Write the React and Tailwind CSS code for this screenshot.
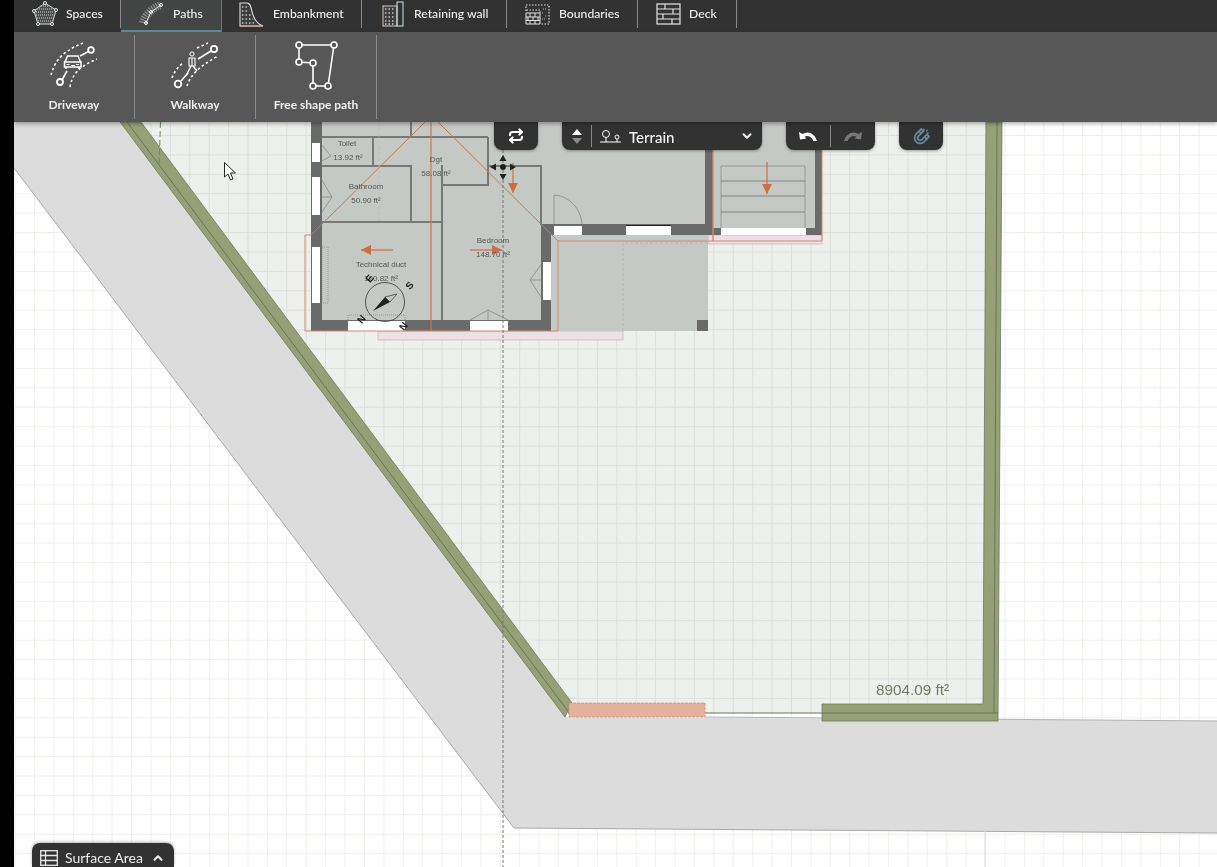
import { ChevronDown, ChevronUp, Repeat } from "lucide-react";

const tabs = [
  { label: "Spaces", w: "w-[107px]", pl: "pl-[18px]", gap: "gap-[8px]", icon: <SpacesIcon /> },
  { label: "Paths", w: "w-[101px]", pl: "pl-[18px]", gap: "gap-[8px]", icon: <PathsIcon />, active: true },
  { label: "Embankment", w: "w-[140px]", pl: "pl-[17px]", gap: "gap-[9px]", icon: <EmbankmentIcon /> },
  { label: "Retaining wall", w: "w-[145px]", pl: "pl-[20px]", gap: "gap-[10px]", icon: <RetainingIcon /> },
  { label: "Boundaries", w: "w-[131px]", pl: "pl-[18px]", gap: "gap-[9px]", icon: <BoundariesIcon /> },
  { label: "Deck", w: "w-[99px]", pl: "pl-[18px]", gap: "gap-[8px]", icon: <DeckIcon /> },
];

function SpacesIcon() {
  return (
    <svg width="26" height="26" viewBox="0 0 26 26" fill="none">
      <path d="M13 2 L24 9 L20 23 L6 23 L2 10 Z" fill="#4a4a4a" stroke="#cfe3e6" strokeWidth="1" />
      <path d="M5 8h16M4 11h18M4 14h18M5 17h16M6 20h14M9 5h8" stroke="#a8a8a8" strokeWidth="1.4" strokeDasharray="1 1" />
      {[[13, 2], [24, 9], [20, 23], [6, 23], [2, 10]].map(([x, y]) => (
        <circle key={x} cx={x} cy={y} r="1.5" fill="#323232" stroke="#fff" strokeWidth="0.9" />
      ))}
    </svg>
  );
}

function PathsIcon() {
  return (
    <svg width="26" height="26" viewBox="0 0 26 26" fill="none">
      <path d="M4 22 C6 14 13 7 22 4" stroke="#8f8f8f" strokeWidth="8" strokeDasharray="1.2 1.2" />
      <path d="M7 22 L12 11 L22 4" stroke="#d8e8ea" strokeWidth="1" />
      <circle cx="7" cy="22" r="1.5" stroke="#fff" />
      <circle cx="12" cy="11" r="1.5" stroke="#fff" />
      <circle cx="22" cy="4" r="1.5" stroke="#fff" />
    </svg>
  );
}

function EmbankmentIcon() {
  return (
    <svg width="25" height="26" viewBox="0 0 25 26" fill="none">
      <path d="M1 2 H8 C12 2 12 8 14 14 C16 20 19 23 24 25 H1 Z" fill="#3c3c3c" stroke="#ddd" strokeWidth="1.1" />
      <path d="M3 6h6M3 10h7M3 14h9M3 18h11M3 22h14" stroke="#c5c5c5" strokeWidth="1.5" strokeDasharray="1.5 2" />
      <path d="M1 25 H24" stroke="#e0a58a" strokeWidth="1" />
    </svg>
  );
}

function RetainingIcon() {
  return (
    <svg width="22" height="26" viewBox="0 0 22 26" fill="none">
      <rect x="1" y="5" width="14" height="20" fill="#3c3c3c" stroke="#d8c8be" strokeWidth="1" />
      <path d="M3 8h10M3 12h10M3 16h10M3 20h10M3 23h10" stroke="#c5c5c5" strokeWidth="1.5" strokeDasharray="1.5 2" />
      <rect x="15" y="1" width="6" height="24" stroke="#cfe3e6" strokeWidth="1" />
    </svg>
  );
}

function BoundariesIcon() {
  return (
    <svg width="25" height="22" viewBox="0 0 25 22" fill="none">
      <path d="M1 10h14v11H1z M1 14h14 M1 17.5h14 M5 10v4 M10 10v4 M3 14v3.5 M8 14v3.5 M13 14v3.5 M5 17.5v3.5 M10 17.5v3.5" stroke="#e2e2e2" strokeWidth="1" />
      <path d="M1 8 V2 H24 V21 H15 M15 10 V7 H1" stroke="#ddd" strokeWidth="1.2" strokeDasharray="1.5 1.5" />
      <path d="M18 6h3M17 10h2M20 13h2M17 16h3" stroke="#bbb" strokeWidth="1" strokeDasharray="1 1" />
    </svg>
  );
}

function DeckIcon() {
  return (
    <svg width="25" height="22" viewBox="0 0 25 22" fill="none">
      <rect x="1" y="1" width="23" height="20" stroke="#e4e4e4" strokeWidth="1.2" />
      <path d="M1 6h23M1 11h23M1 16h23M9 1v5M17 6v5M7 11v5M16 16v5" stroke="#e4e4e4" strokeWidth="1.2" />
    </svg>
  );
}

function DrivewayIcon() {
  return (
    <svg width="48" height="48" viewBox="0 0 48 48" fill="none">
      <path d="M1 34 C4 24 8 12 33 2" stroke="#fff" strokeWidth="1.6" strokeDasharray="2.5 2.5" />
      <path d="M20 46 C22 34 28 26 47 18" stroke="#fff" strokeWidth="1.6" strokeDasharray="2.5 2.5" />
      <circle cx="10" cy="41" r="3" stroke="#fff" strokeWidth="1.8" />
      <path d="M12 39 L17 30" stroke="#fff" strokeWidth="1.6" />
      <circle cx="41" cy="9" r="2.8" stroke="#fff" strokeWidth="1.8" />
      <path d="M38.5 10.5 L30 15" stroke="#fff" strokeWidth="1.6" />
      <path d="M15 21 L17.5 15 H28 L30.5 21 M14.5 21 H31 V26 H14.5 Z M16 26 v2 M29 26 v2" stroke="#fff" strokeWidth="1.5" />
      <path d="M16.5 23.5h3M26 23.5h3M21 24.5h4" stroke="#fff" strokeWidth="1.2" />
    </svg>
  );
}

function WalkwayIcon() {
  return (
    <svg width="50" height="48" viewBox="0 0 50 48" fill="none">
      <path d="M2 37 C4 31 8 26 13 22" stroke="#fff" strokeWidth="1.6" strokeDasharray="2.5 2.5" />
      <path d="M27 7 L38 2" stroke="#fff" strokeWidth="1.6" strokeDasharray="2.5 2.5" />
      <path d="M17 45 C20 35 28 26 48 15" stroke="#fff" strokeWidth="1.6" strokeDasharray="2.5 2.5" />
      <circle cx="8" cy="43" r="3.3" stroke="#fff" strokeWidth="1.8" />
      <path d="M11 40 L18 32" stroke="#fff" strokeWidth="1.6" />
      <circle cx="44" cy="8" r="3.1" stroke="#fff" strokeWidth="1.8" />
      <path d="M41 10 L28 18" stroke="#fff" strokeWidth="1.6" />
      <circle cx="22" cy="13" r="2.1" stroke="#fff" strokeWidth="1" />
      <path d="M19 17 H25 V25 H19 Z M22 17 V25" stroke="#fff" strokeWidth="1.1" />
      <path d="M23 25 L27 30 M21 25 L17 33" stroke="#fff" strokeWidth="1.5" />
    </svg>
  );
}

function FreeShapeIcon() {
  const pts = [[6, 5], [41, 5], [35, 46], [20, 46], [20, 23], [6, 22]];
  return (
    <svg width="46" height="52" viewBox="0 0 46 52" fill="none">
      <path d="M6 5 L41 5 L35 46 L20 46 L20 23 L6 22 Z" stroke="#fff" strokeWidth="1.6" />
      {pts.map(([x, y]) => (
        <circle key={x + "-" + y} cx={x} cy={y} r="3" fill="#575757" stroke="#fff" strokeWidth="1.6" />
      ))}
    </svg>
  );
}

function TerrainIcon() {
  return (
    <svg width="22" height="14" viewBox="0 0 22 14" fill="none" stroke="#fff" strokeWidth="1">
      <circle cx="6" cy="5" r="3.5" />
      <path d="M6 8.5 V13 M0 13 H21" />
      <circle cx="17" cy="8" r="2" />
      <path d="M17 10 V13" />
    </svg>
  );
}

function TableIcon() {
  return (
    <svg width="18" height="16" viewBox="0 0 18 16" fill="none" stroke="#e8e8e8" strokeWidth="1.3">
      <rect x="0.7" y="0.7" width="16.6" height="14.6" />
      <path d="M1 5.5h16M1 10.5h16M5.5 1v14" />
    </svg>
  );
}

// same curved arrow for undo and redo, redo is just flipped
function CurvedArrow({ color, flip }) {
  return (
    <svg width="18" height="10" viewBox="0 0 18 10" className={flip ? "-scale-x-100" : ""}>
      <path d="M0 1 L1 8.5 L7.5 7.5 L5.5 5.8 C8.5 4.2 12 5 14.5 10 H18 C15.5 2 9 -0.5 3.5 3 Z" fill={color} />
    </svg>
  );
}

function MagnetIcon() {
  return (
    <svg width="19" height="19" viewBox="0 0 24 24" fill="none" stroke="#64899a" strokeWidth="2.2" strokeLinejoin="round">
      <g transform="rotate(45 11 13)">
        <path d="M4 5 H8 V14 a3 3 0 0 0 6 0 V5 H18 V14 a7 7 0 0 1 -14 0 Z M4 9 H8 M14 9 H18" />
      </g>
      <path d="M15 2 V4.5 M21 8 H18.5 M19.5 3.5 L18 5.5" strokeWidth="1.8" />
    </svg>
  );
}

function Wall({ x, y, w, h, color = "#6a6a6a" }) {
  return <rect x={x} y={y} width={w} height={h} fill={color} />;
}

function Arrow({ x1, y1, x2, y2 }) {
  const dx = Math.sign(x2 - x1);
  const dy = Math.sign(y2 - y1);
  const head = dy === 0
    ? `${x2},${y2} ${x2 - dx * 10},${y2 - 5} ${x2 - dx * 10},${y2 + 5}`
    : `${x2},${y2} ${x2 - 5},${y2 - dy * 10} ${x2 + 5},${y2 - dy * 10}`;
  return (
    <g>
      <line x1={x1} y1={y1} x2={x2} y2={y2} stroke="#c96f42" strokeWidth="1.2" />
      <polygon points={head} fill="#c96f42" />
    </g>
  );
}

function RoomLabel({ x, y, children }) {
  return (
    <text x={x} y={y} textAnchor="middle" fontSize="8" fill="#555" fontFamily="Liberation Sans, sans-serif">
      {children}
    </text>
  );
}

function Plan() {
  const letter = { fontSize: 10, fill: "#222", fontFamily: "Liberation Sans, sans-serif", fontWeight: 700, textAnchor: "middle" };
  const thin = "#787878";
  return (
    <svg className="absolute inset-0 h-full w-full" viewBox="14 122 1203 745" preserveAspectRatio="none">
      <defs>
        <pattern id="grid" x="34" y="135" width="19.41" height="19.41" patternUnits="userSpaceOnUse">
          <path d="M0 0H19.41M0 0V19.41" stroke="#efefeb" strokeWidth="2" fill="none" />
        </pattern>
        <clipPath id="noRoad">
          <path clipRule="evenodd" d="M14 122H1217V867H14Z M14 122 L120 122 L566 717 L1217 721 L1217 833 L514 828 L14 168Z" />
        </clipPath>
      </defs>
      <rect x="14" y="122" width="1203" height="745" fill="#fff" />

      {/* terrain */}
      <polygon points="141,122 572,703 568,713 983,713 1002,122" fill="#edf0ec" />
      {/* road */}
      <polygon points="14,122 120,122 566,717 1217,721 1217,833 514,828 14,168" fill="#dcdcdc" />
      <rect x="14" y="122" width="1203" height="745" fill="url(#grid)" style={{ mixBlendMode: "multiply" }} clipPath="url(#noRoad)" />
      <path d="M14 168 L514 828 L1217 833" stroke="#a9a9a9" strokeWidth="1" fill="none" />
      <path d="M705 717 L1217 721" stroke="#b0b0b0" strokeWidth="1" fill="none" />
      <path d="M985 830 V867" stroke="#d8d8d8" strokeWidth="1" />

      {/* walls of the plot */}
      <polygon points="120,122 141,122 572,703 565,717" fill="#979f77" stroke="#6b7a5c" strokeWidth="0.8" />
      <line x1="127" y1="122" x2="570" y2="714" stroke="#66775a" strokeWidth="1" />
      <polygon points="986,122 1002,122 998,721 822,721 822,704 983,704" fill="#979f77" stroke="#6b7a5c" strokeWidth="0.8" />
      <line x1="997" y1="122" x2="994" y2="713" stroke="#66775a" strokeWidth="1" />
      <line x1="568" y1="713" x2="998" y2="713" stroke="#66775a" strokeWidth="1" />
      <rect x="569" y="703" width="136" height="14" fill="#e2b29c" stroke="#d9886a" strokeWidth="0.7" strokeDasharray="3 1" />
      <line x1="160.5" y1="122" x2="159" y2="166" stroke="#6b8a5c" strokeWidth="1" strokeDasharray="6 3" />
      <text x="876" y="695" fontSize="15.3" fill="#6f7d60" fontFamily="Liberation Sans, sans-serif">8904.09 ft²</text>

      {/* pink strips and floors */}
      <rect x="378" y="331" width="245" height="9" fill="#ecdfe6" stroke="#b9adb3" strokeWidth="0.6" />
      <rect x="708" y="235" width="114" height="9" fill="#ecdfe6" stroke="#b9adb3" strokeWidth="0.6" />
      <rect x="311" y="122" width="511" height="113" fill="#c5c9c5" />
      <rect x="311" y="235" width="397" height="96" fill="#c5c9c5" />

      {/* thick walls */}
      <Wall x={311} y={122} w={11} h={209} />
      <Wall x={311} y={320} w={240} h={11} />
      <Wall x={541} y={224} w={10} h={107} />
      <Wall x={541} y={224} w={172} h={11} />
      <Wall x={705} y={122} w={8} h={113} />
      <Wall x={815} y={122} w={7} h={113} />
      <Wall x={713} y={228} w={109} h={7} />
      <rect x="697" y="320" width="11" height="11" fill="#6a6a6a" />

      {/* thin walls */}
      <Wall color={thin} x={322} y={136} w={166} h={2} />
      <Wall color={thin} x={372} y={137} w={2} h={29} />
      <Wall color={thin} x={322} y={165} w={90} h={2} />
      <Wall color={thin} x={410} y={122} w={2} h={15} />
      <Wall color={thin} x={410} y={165} w={2} h={57} />
      <Wall color={thin} x={322} y={221} w={120} h={2} />
      <Wall color={thin} x={441} y={165} w={2} h={155} />
      <Wall color={thin} x={441} y={184} w={48} h={2} />
      <Wall color={thin} x={487} y={137} w={2} h={49} />
      <Wall color={thin} x={488} y={165} w={54} h={2} />
      <Wall color={thin} x={540} y={165} w={2} h={60} />

      {/* windows */}
      <rect x="312" y="143" width="8" height="19" fill="#fff" />
      <rect x="312" y="177" width="8" height="38" fill="#fff" />
      <rect x="312" y="247" width="8" height="56" fill="#fff" />
      <rect x="348" y="321" width="57" height="10" fill="#fff" />
      <rect x="470" y="321" width="38" height="10" fill="#fff" />
      <rect x="543" y="262" width="8" height="38" fill="#fff" />
      <rect x="554" y="226" width="28" height="9" fill="#fff" />
      <rect x="626" y="226" width="45" height="9" fill="#fff" />
      <line x1="626" y1="225.5" x2="671" y2="225.5" stroke="#222" strokeWidth="1" />
      <rect x="721" y="228" width="85" height="7" fill="#fff" />

      {/* doors and window swings */}
      <g stroke="#777" strokeWidth="0.6" fill="none">
        <path d="M554 226 V195 C570 196 582 210 582 226" />
        <path d="M320 143 L331 156 L320 162 M320 177 L332 197 L320 215 M320 197 H332" />
        <rect x="322" y="247" width="6" height="56" strokeDasharray="1 1" />
        <path d="M543 262 L530 280 L543 300 M530 280 H543" />
        <path d="M470 320 L488 310 L508 320 M488 310 V320" />
        <path d="M348 320 V315 H405 V320" strokeDasharray="1 1" />
        <path d="M721 166 H805 V228 M721 166 V228" />
        <path d="M721 181 H805 M721 196 H805 M721 212 H805" stroke="#555" />
      </g>

      {/* orange outlines */}
      <g stroke="#d08a68" strokeWidth="1" fill="none">
        <path d="M311 235 H305 V331 H558 V241 H822 V122" />
        <path d="M713 122 V241" strokeWidth="1.4" />
      </g>
      <g stroke="#c9784f" strokeWidth="1" fill="none">
        <path d="M311 235 L425 122 M438 122 L558 241" />
        <path d="M431 122 V331" strokeWidth="1.2" />
      </g>

      {/* dashed guides */}
      <path d="M503 150 V867" stroke="#777" strokeWidth="1" strokeDasharray="3 2" fill="none" />
      <path d="M379 122 V222" stroke="#bbb" strokeWidth="0.8" strokeDasharray="3 3" fill="none" />
      <path d="M623 331 V243 H708" stroke="#aeb2ae" strokeWidth="0.8" strokeDasharray="3 2" fill="none" />

      <Arrow x1={393} y1={250} x2={361} y2={250} />
      <Arrow x1={470} y1={250} x2={502} y2={250} />
      <Arrow x1={513} y1={163} x2={513} y2={193} />
      <Arrow x1={767} y1={162} x2={767} y2={194} />

      <RoomLabel x={347} y={146}>Toilet</RoomLabel>
      <RoomLabel x={348} y={160}>13.92 ft²</RoomLabel>
      <RoomLabel x={436} y={162}>Dgt</RoomLabel>
      <RoomLabel x={436} y={176}>58.08 ft²</RoomLabel>
      <RoomLabel x={366} y={189}>Bathroom</RoomLabel>
      <RoomLabel x={366} y={203}>50.90 ft²</RoomLabel>
      <RoomLabel x={381} y={267}>Technical duct</RoomLabel>
      <RoomLabel x={381} y={281}>120.82 ft²</RoomLabel>
      <RoomLabel x={493} y={243}>Bedroom</RoomLabel>
      <RoomLabel x={493} y={257}>148.70 ft²</RoomLabel>

      {/* move handle */}
      <g fill="#222">
        <circle cx="503" cy="167" r="3" />
        <polygon points="503,155 499.5,161 506.5,161" />
        <polygon points="503,180 499.5,174 506.5,174" />
        <polygon points="490,167 496,163.5 496,170.5" />
        <polygon points="516,167 510,163.5 510,170.5" />
      </g>

      {/* compass */}
      <circle cx="385" cy="302" r="19.5" fill="none" stroke="#333" strokeWidth="0.8" />
      <polygon points="373,311 385,297 390,302" fill="#222" />
      <polygon points="397,294 385,297 390,302" fill="#c5c9c5" stroke="#333" strokeWidth="0.7" />
      <text x={369} y={282} transform="rotate(-50 369 278)" {...letter}>E</text>
      <text x={409} y={289} transform="rotate(-50 409 285)" {...letter}>S</text>
      <text x={361} y={323} transform="rotate(-50 361 319)" {...letter}>N</text>
      <text x={403} y={330} transform="rotate(-50 403 326)" {...letter}>N</text>

      {/* mouse pointer */}
      <path d="M224.5 162.5 V177 L228 174 L230.5 180 L233 179 L230.5 173 L235.5 173 Z" fill="#fff" stroke="#111" strokeWidth="0.9" />
    </svg>
  );
}

export default function App() {
  return (
    <div className="flex h-screen w-full overflow-hidden bg-black font-['Lato',sans-serif]">
      <div className="w-[14px] shrink-0 bg-black" />
      <div className="flex min-w-0 flex-1 flex-col">
        {/* tabs */}
        <div className="relative z-10 flex h-8 shrink-0 bg-[#323232]">
          {tabs.map((t) => (
            <div
              key={t.label}
              className={
                t.active
                  ? `flex h-8 items-center border-b-[2.5px] border-r border-b-[#5f8c9a] border-r-[#777] bg-[#434545] pb-[2px] ${t.w} ${t.pl} ${t.gap}`
                  : `flex h-7 items-center border-r border-[#8a8a8a] ${t.w} ${t.pl} ${t.gap}`
              }
            >
              {t.icon}
              <span className="text-[12.2px] font-medium text-[#f2f2f2]">{t.label}</span>
            </div>
          ))}
        </div>

        {/* tool row */}
        <div className="relative z-10 flex h-[90px] shrink-0 items-stretch bg-[#575757] py-[3px] shadow-[0_2px_4px_rgba(0,0,0,0.3)]">
          <div className="flex w-[121px] flex-col items-center border-r border-[#8a8a8a] pt-[6px]">
            <DrivewayIcon />
            <span className="mt-[7px] text-[12px] font-bold text-[#eeeeee]">Driveway</span>
          </div>
          <div className="flex w-[121px] flex-col items-center border-r border-[#8a8a8a] pt-[6px]">
            <WalkwayIcon />
            <span className="mt-[7px] text-[12px] font-bold text-[#eeeeee]">Walkway</span>
          </div>
          <div className="flex w-[121px] flex-col items-center border-r border-[#8a8a8a] pt-[5px]">
            <FreeShapeIcon />
            <span className="mt-[4px] text-[12px] font-bold text-[#eeeeee]">Free shape path</span>
          </div>
        </div>

        {/* canvas */}
        <div className="relative min-h-0 flex-1">
          <Plan />

          <div className="absolute left-[480px] top-0 flex h-7 w-11 items-center justify-center rounded-b-lg bg-[#323232] shadow-[0_1px_3px_rgba(0,0,0,0.35)]">
            <Repeat size={16} strokeWidth={3} color="#fff" />
          </div>

          <div className="absolute left-[548px] top-0 flex h-7 w-[200px] items-center rounded-b-lg bg-[#323232] shadow-[0_1px_3px_rgba(0,0,0,0.35)]">
            <div className="ml-[10px] flex flex-col gap-[3px]">
              <div className="h-0 w-0 border-x-[5px] border-b-[6px] border-x-transparent border-b-white" />
              <div className="h-0 w-0 border-x-[5px] border-t-[6px] border-x-transparent border-t-[#8a8a8a]" />
            </div>
            <div className="ml-[9px] h-[22px] w-px bg-[#888]" />
            <div className="ml-[8px]"><TerrainIcon /></div>
            <span className="ml-[7px] pt-[2px] text-[15px] font-medium text-[#f4f4f4]">Terrain</span>
            <ChevronDown size={14} strokeWidth={3.5} color="#eee" className="ml-auto mr-[8px]" />
          </div>

          <div className="absolute left-[772px] top-0 flex h-7 w-[89px] items-center rounded-b-lg bg-[#323232] shadow-[0_1px_3px_rgba(0,0,0,0.35)]">
            <div className="ml-[13px]"><CurvedArrow color="#fff" /></div>
            <div className="ml-[13px] h-[22px] w-px bg-[#888]" />
            <div className="ml-[13px]"><CurvedArrow color="#777" flip /></div>
          </div>

          <div className="absolute left-[885px] top-0 flex h-7 w-11 items-center justify-center rounded-b-lg bg-[#323232] shadow-[0_1px_3px_rgba(0,0,0,0.35)]">
            <MagnetIcon />
          </div>

          <div className="absolute bottom-0 left-[18px] flex h-6 w-[142px] items-center rounded-t-lg bg-[#323232] pl-2 pt-[5px] shadow-[0_-1px_3px_rgba(0,0,0,0.3)]">
            <TableIcon />
            <span className="ml-[7px] text-[14px] text-[#eeeeee]">Surface Area</span>
            <ChevronUp size={14} strokeWidth={3.5} color="#eee" className="ml-[8px]" />
          </div>
        </div>
      </div>
    </div>
  );
}
